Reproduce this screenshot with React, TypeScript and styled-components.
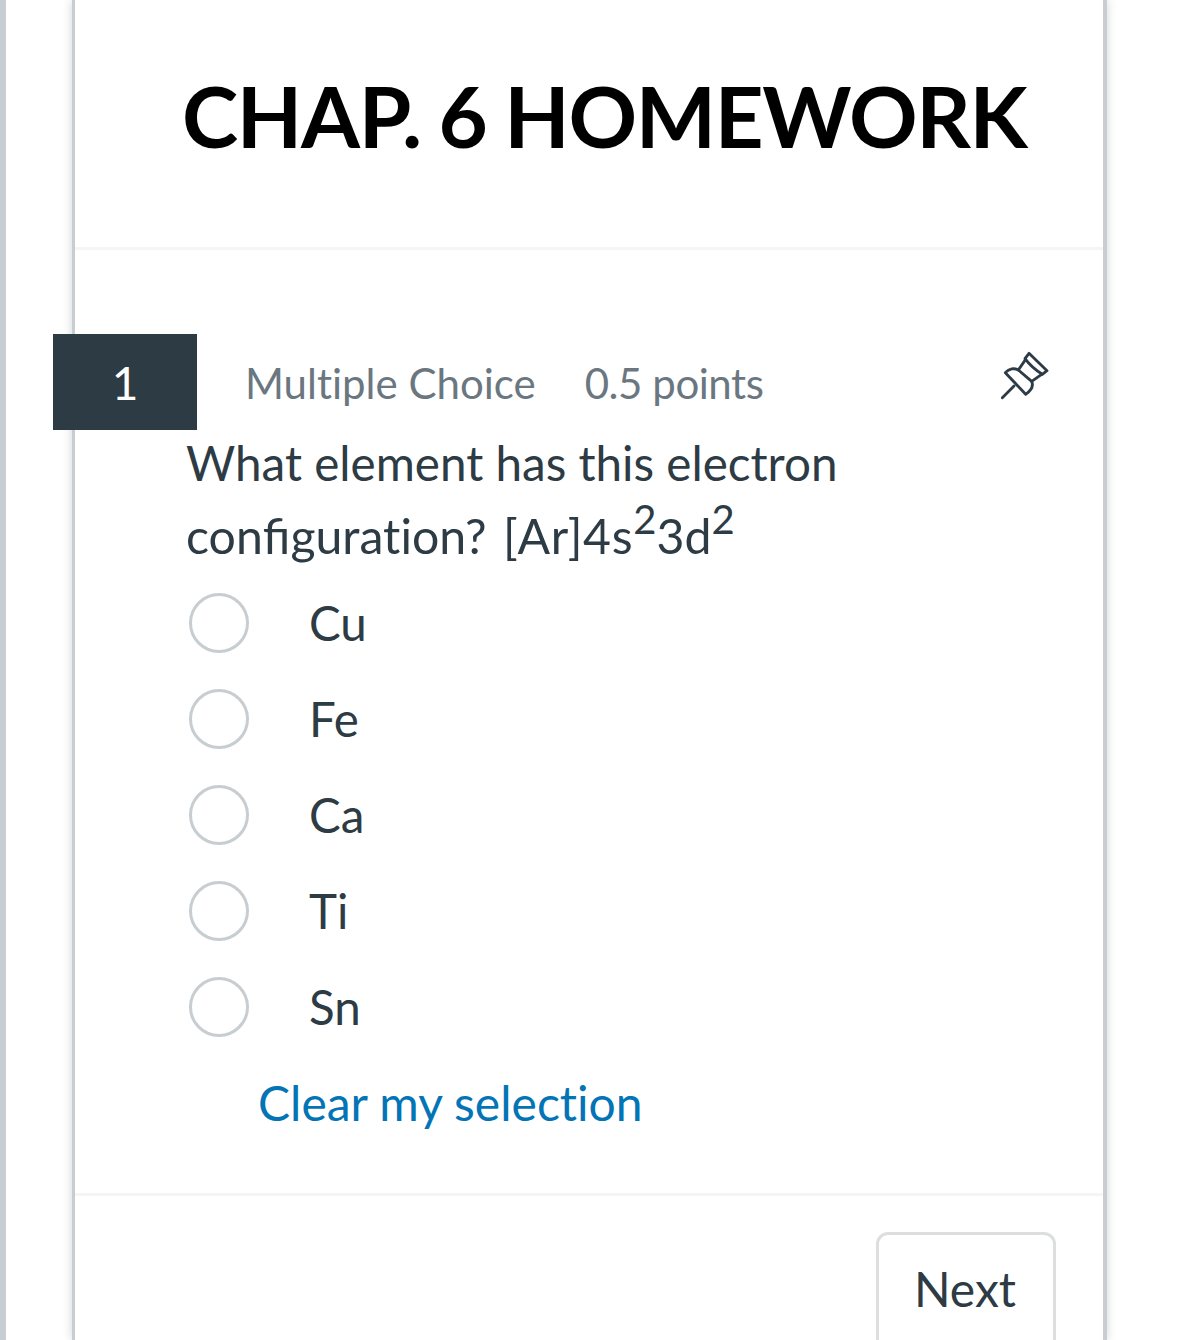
import React from "react";
import styled, { createGlobalStyle } from "styled-components";

const Global = createGlobalStyle`
  html, body { margin: 0; padding: 0; background: #fff; }
  * { box-sizing: border-box; }
`;

const Page = styled.div`
  width: 1179px;
  height: 1340px;
  overflow: hidden;
  display: flex;
  font-family: Lato, "Liberation Sans", sans-serif;
  font-variant-ligatures: none;
  color: #2d3b45;
  background: #fff;
`;

const Strip = styled.div`
  width: 6px;
  flex: none;
  background: #c7cdd1;
`;

const Card = styled.main`
  width: 1035px;
  height: 1340px;
  margin-left: 66px;
  flex: none;
  border-left: 3px solid #c7cdd1;
  border-right: 4px solid #c7cdd1;
  box-shadow: 0 0 9px rgba(45, 59, 69, 0.22);
`;

const Header = styled.header`
  height: 250px;
  padding: 65px 0 0 107px;
  border-bottom: 3px solid #f5f5f5;
`;

const Title = styled.h1`
  margin: 0;
  font-size: 85px;
  line-height: 100px;
  font-weight: 700;
  letter-spacing: -1.36px;
  word-spacing: -1.5px;
  color: #000;
  white-space: nowrap;
`;

const Question = styled.section`
  height: 946px;
  padding-top: 84px;
  border-bottom: 3px solid #f5f5f5;
`;

const QuestionHead = styled.div`
  display: flex;
  align-items: flex-start;
  margin-left: -22px;
  height: 96px;
`;

const NumberBadge = styled.div`
  width: 144px;
  height: 96px;
  background: #2d3b45;
  color: #fff;
  font-size: 46px;
  display: flex;
  align-items: center;
  justify-content: center;
  position: relative;
`;

const Meta = styled.div`
  display: flex;
  gap: 49px;
  margin-left: 48px;
  margin-top: 23px;
  font-size: 42px;
  line-height: 52px;
  color: #6b7780;
  flex: 1;
`;

const Points = styled.span`
  letter-spacing: -0.45px;
`;

const PinIcon = styled.svg`
  width: 50px;
  height: 50px;
  flex: none;
  margin: 16px 54px 0 0;
`;

const Prompt = styled.p`
  margin: -4px 0 0;
  padding-left: 111px;
  font-size: 47.6px;
  line-height: 73px;
  height: 146px;
`;

const ConfigLine = styled.span`
  font-size: 48.2px;
`;

const Ligature = styled.span`
  font-variant-ligatures: normal;
`;

const Formula = styled.span`
  margin-left: 4px;
`;

const Element = styled.span`
  letter-spacing: 0.7px;
`;

const Sup = styled.sup`
  font-size: 40px;
  line-height: 0;
  vertical-align: 20px;
`;

const Options = styled.ul`
  list-style: none;
  margin: 3px 0 0;
  padding: 0 0 0 114px;
  display: flex;
  flex-direction: column;
`;

const Option = styled.li`
  height: 96px;
  display: flex;
  align-items: center;
  font-size: 47.5px;
`;

const OptionLabel = styled.span`
  margin-top: -2px;
`;

const Radio = styled.span`
  width: 60px;
  height: 60px;
  border-radius: 50%;
  border: 3px solid #c7cdd1;
  flex: none;
  margin-right: 60px;
  background: #fff;
`;

const ClearLink = styled.a`
  display: block;
  margin: 19px 0 0 183px;
  font-size: 48px;
  line-height: 58px;
  color: #0374b5;
`;

const Footer = styled.footer`
  display: flex;
  justify-content: flex-end;
  padding: 36px 47px 0 0;
`;

const NextButton = styled.button`
  width: 180px;
  height: 130px;
  padding: 0 2px 18px 0;
  background: #fff;
  border: 3px solid #dcdee0;
  border-radius: 12px;
  font-family: inherit;
  font-variant-ligatures: none;
  font-size: 48px;
  color: #2d3b45;
`;

const options = ["Cu", "Fe", "Ca", "Ti", "Sn"];

export default function App() {
  return (
    <>
      <Global />
      <Page>
        <Strip />
        <Card>
          <Header>
            <Title>CHAP. 6 HOMEWORK</Title>
          </Header>
          <Question>
            <QuestionHead>
              <NumberBadge>1</NumberBadge>
              <Meta>
                <span>Multiple Choice</span>
                <Points>0.5 points</Points>
              </Meta>
              <PinIcon viewBox="60 60 150 150" fill="none" stroke="#2d3b45" strokeWidth="8.5" strokeLinecap="round" strokeLinejoin="round">
                <path d="M150 70L204 122L190 133C172 122 150 102 138 86Z" />
                <path d="M140 88L118 120M188 133L158 154" />
                <path d="M79 128L140 193C156 182 164 168 158 154L118 120C106 113 90 116 79 128Z" />
                <path d="M105 168L70 203" />
              </PinIcon>
            </QuestionHead>
            <Prompt>
              What element has this electron
              <br />
              <ConfigLine>
                con<Ligature>fi</Ligature>guration? <Formula><Element>[Ar]4s</Element><Sup>2</Sup>3d<Sup>2</Sup></Formula>
              </ConfigLine>
            </Prompt>
            <Options>
              {options.map((o) => (
                <Option key={o}>
                  <Radio />
                  <OptionLabel>{o}</OptionLabel>
                </Option>
              ))}
            </Options>
            <ClearLink>Clear my selection</ClearLink>
          </Question>
          <Footer>
            <NextButton>Next</NextButton>
          </Footer>
        </Card>
      </Page>
    </>
  );
}
